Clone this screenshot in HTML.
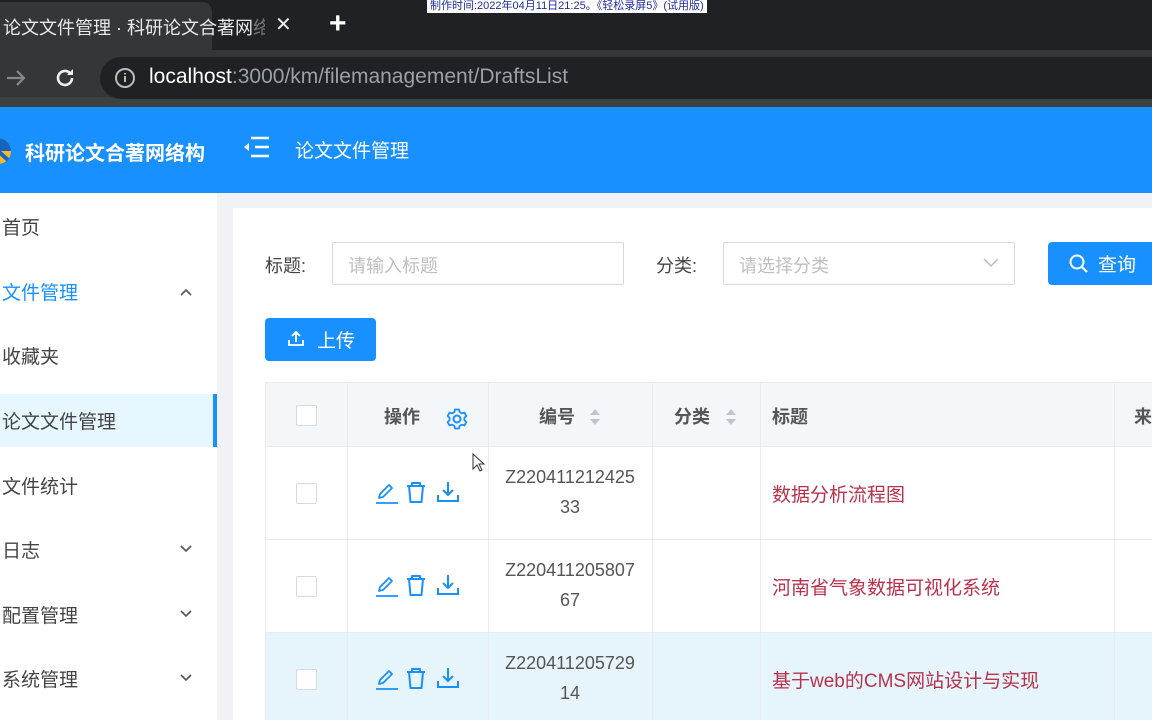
<!DOCTYPE html>
<html><head><meta charset="utf-8"><style>
*{margin:0;padding:0;box-sizing:border-box}
body{width:1152px;height:720px;overflow:hidden;position:relative;font-family:"Liberation Sans","Noto Sans CJK SC",sans-serif;background:#f0f2f5}
.a{position:absolute}
.tabbar{left:0;top:0;width:1152px;height:50px;background:#202124}
.tab{left:0;top:2px;width:212px;height:48px;background:#35363a;border-radius:0 10px 0 0}
.toolbar{left:0;top:50px;width:1152px;height:57px;background:#35363a}
.omni{left:100px;top:57px;width:1080px;height:42px;background:#202124;border-radius:21px}
.hdr{left:0;top:107px;width:1152px;height:86px;background:#1890ff}
.side{left:0;top:193px;width:217px;height:527px;background:#fff}
.mi{position:absolute;left:2px;font-size:19px;color:#444}
.card{left:233px;top:208px;width:919px;height:512px;background:#fff}
.inp{border:1px solid #d9d9d9;border-radius:2px;height:43px;top:242px;font-size:18px;color:#bfbfbf;padding:9px 15px}
.btn{background:#1890ff;color:#fff;border-radius:4px;font-size:19px}
.th{background:#f3f7f9}
.cb{width:21px;height:21px;border:1px solid #d9d9d9;border-radius:2px;background:#fff}
.vl{width:1px;background:#e8ecef}
.hl{height:1px;background:#e8ecef}
.t{font-size:19px;color:#b8324c}
.num{font-size:18px;color:#555;text-align:center;width:164px;line-height:30px}
</style></head><body>
<div class="a tabbar"></div>
<div class="a tab"></div>
<div class="a" style="left:3px;top:14px;font-size:18px;color:#e8eaed;white-space:nowrap;width:262px;overflow:hidden">论文文件管理 · 科研论文合著网<span style="color:#777">络</span></div>
<div class="a" style="left:275px;top:12px;font-size:20px;color:#e8eaed">✕</div>
<div class="a" style="left:329px;top:7px;font-size:30px;color:#fff;font-weight:bold">+</div>
<div class="a" style="left:427px;top:0;height:13px;background:#fff;color:#1f2d9c;font-size:11px;line-height:13px;padding:0 3px;white-space:nowrap">制作时间:2022年04月11日21:25。《轻松录屏5》(试用版)</div>
<div class="a toolbar"></div>
<div class="a" style="left:0;top:97px;width:1152px;height:10px;background:#3c4043"></div>
<div class="a omni"></div>
<svg class="a" style="left:4px;top:66px" width="24" height="24" viewBox="0 0 24 24"><path d="M3 12h17M13 5l7 7-7 7" stroke="#888" stroke-width="2.2" fill="none"/></svg>
<svg class="a" style="left:53px;top:66px" width="24" height="24" viewBox="0 0 24 24"><path d="M19 12a7 7 0 1 1-2.2-5.1" stroke="#eee" stroke-width="2.6" fill="none"/><path d="M20 3v6h-6z" fill="#eee"/></svg>
<svg class="a" style="left:114px;top:67px" width="22" height="22" viewBox="0 0 22 22"><circle cx="11" cy="11" r="9" stroke="#bbb" stroke-width="2" fill="none"/><path d="M11 9v6M11 6v1.5" stroke="#bbb" stroke-width="2"/></svg>
<div class="a" style="left:149px;top:65px;font-size:21px;color:#fff;white-space:nowrap">localhost<span style="color:#9aa0a6">:3000/km/filemanagement/DraftsList</span></div>
<div class="a hdr"></div>
<svg class="a" style="left:-10px;top:135px" width="22" height="32" viewBox="0 0 22 32"><circle cx="8" cy="16" r="13" fill="#f6b826"/><path d="M8 3a13 13 0 0 1 13 13H8z" fill="#1565c0"/><path d="M8 16l10 9" stroke="#1565c0" stroke-width="4"/></svg>
<div class="a" style="left:25px;top:137px;font-size:20px;font-weight:bold;color:#fff">科研论文合著网络构</div>
<svg class="a" style="left:242px;top:135px" width="28" height="24" viewBox="0 0 28 24"><path d="M9 3h18M13 12h14M9 21h18" stroke="#fff" stroke-width="2.6"/><path d="M2 12l5-4v8z" fill="#fff"/></svg>
<div class="a" style="left:295px;top:136px;font-size:19px;color:#fff">论文文件管理</div>
<div class="a side">
<div class="mi" style="top:20px">首页</div>
<div class="mi" style="top:85px;color:#1890ff">文件管理</div>
<svg class="a" style="left:180px;top:95px" width="12" height="8"><path d="M1 7l5-5 5 5" stroke="#555" stroke-width="1.6" fill="none"/></svg>
<div class="mi" style="top:149px">收藏夹</div>
<div class="a" style="left:0;top:201px;width:217px;height:53px;background:#e6f7ff;border-right:4px solid #1890ff"></div>
<div class="mi" style="top:214px">论文文件管理</div>
<div class="mi" style="top:279px">文件统计</div>
<div class="mi" style="top:343px">日志</div>
<div class="mi" style="top:408px">配置管理</div>
<div class="mi" style="top:472px">系统管理</div>
<svg class="a" style="left:180px;top:352px" width="12" height="8"><path d="M1 1l5 5 5-5" stroke="#555" stroke-width="1.6" fill="none"/></svg>
<svg class="a" style="left:180px;top:417px" width="12" height="8"><path d="M1 1l5 5 5-5" stroke="#555" stroke-width="1.6" fill="none"/></svg>
<svg class="a" style="left:180px;top:481px" width="12" height="8"><path d="M1 1l5 5 5-5" stroke="#555" stroke-width="1.6" fill="none"/></svg>
</div>
<div class="a card"></div>
<div class="a" style="left:265px;top:252px;font-size:18px;color:#444">标题:</div>
<div class="a inp" style="left:332px;width:292px">请输入标题</div>
<div class="a" style="left:656px;top:252px;font-size:18px;color:#444">分类:</div>
<div class="a inp" style="left:723px;width:292px">请选择分类</div>
<svg class="a" style="left:983px;top:258px" width="16" height="10"><path d="M1 1l7 7 7-7" stroke="#bbb" stroke-width="1.5" fill="none"/></svg>
<div class="a btn" style="left:1048px;top:242px;width:120px;height:43px"></div>
<svg class="a" style="left:1068px;top:253px" width="22" height="22" viewBox="0 0 22 22"><circle cx="9" cy="9" r="6.5" stroke="#fff" stroke-width="2" fill="none"/><path d="M14 14l5 5" stroke="#fff" stroke-width="2.2"/></svg>
<div class="a" style="left:1098px;top:250px;font-size:19px;color:#fff">查询</div>
<div class="a btn" style="left:265px;top:318px;width:111px;height:43px"></div>
<svg class="a" style="left:287px;top:329px" width="18" height="18" viewBox="0 0 18 18"><path d="M9 13V3M5 7l4-4 4 4M2 11v5h14v-5" stroke="#fff" stroke-width="1.8" fill="none"/></svg>
<div class="a" style="left:317px;top:326px;font-size:19px;color:#fff">上传</div>
<div class="a th" style="left:265px;top:382px;width:887px;height:64px;border-top:1px solid #e8ecef"></div>
<div class="a" style="left:265px;top:632px;width:887px;height:88px;background:#e6f4fb"></div>
<div class="a vl" style="left:265px;top:382px;height:338px"></div>
<div class="a vl" style="left:347px;top:382px;height:338px"></div>
<div class="a vl" style="left:488px;top:382px;height:338px"></div>
<div class="a vl" style="left:652px;top:382px;height:338px"></div>
<div class="a vl" style="left:760px;top:382px;height:338px"></div>
<div class="a vl" style="left:1114px;top:382px;height:338px"></div>
<div class="a hl" style="left:265px;top:446px;width:887px"></div>
<div class="a hl" style="left:265px;top:539px;width:887px"></div>
<div class="a hl" style="left:265px;top:632px;width:887px"></div>
<div class="a cb" style="left:296px;top:405px"></div>
<div class="a cb" style="left:296px;top:483px"></div>
<div class="a cb" style="left:296px;top:576px"></div>
<div class="a cb" style="left:296px;top:669px"></div>
<div class="a" style="left:384px;top:403px;font-size:18px;font-weight:bold;color:#555">操作</div>
<svg class="a" style="left:445px;top:407px" width="24" height="24" viewBox="0 0 24 24"><circle cx="12" cy="12" r="3.5" stroke="#1890ff" stroke-width="2" fill="none"/><path d="M10 2.5h4l.6 2.6 2.3 1.3 2.5-.8 2 3.4-2 1.8v2.4l2 1.8-2 3.4-2.5-.8-2.3 1.3-.6 2.6h-4l-.6-2.6-2.3-1.3-2.5.8-2-3.4 2-1.8v-2.4l-2-1.8 2-3.4 2.5.8 2.3-1.3z" stroke="#1890ff" stroke-width="1.8" fill="none" stroke-linejoin="round"/></svg>
<div class="a" style="left:539px;top:403px;font-size:18px;font-weight:bold;color:#555">编号</div>
<div class="a" style="left:674px;top:403px;font-size:18px;font-weight:bold;color:#555">分类</div>
<div class="a" style="left:772px;top:403px;font-size:18px;font-weight:bold;color:#555">标题</div>
<div class="a" style="left:1134px;top:403px;font-size:18px;font-weight:bold;color:#555">来</div>
<svg class="a" style="left:589px;top:408px" width="12" height="18"><path d="M1 7l5-6 5 6zM1 11l5 6 5-6z" fill="#c0c4cc"/></svg>
<svg class="a" style="left:725px;top:408px" width="12" height="18"><path d="M1 7l5-6 5 6zM1 11l5 6 5-6z" fill="#c0c4cc"/></svg>
<svg class="a" style="left:472px;top:453px" width="14" height="20" viewBox="0 0 14 20"><path d="M1 1v15l4-4 3 6 2-1-3-6h5z" fill="#fff" stroke="#333" stroke-width="1"/></svg>
<div class="a num" style="left:488px;top:462px">Z220411212425<br>33</div>
<div class="a num" style="left:488px;top:555px">Z220411205807<br>67</div>
<div class="a num" style="left:488px;top:648px">Z220411205729<br>14</div>
<div class="a t" style="left:772px;top:480px">数据分析流程图</div>
<div class="a t" style="left:772px;top:573px">河南省气象数据可视化系统</div>
<div class="a t" style="left:772px;top:666px">基于web的CMS网站设计与实现</div>
<svg width="0" height="0" style="position:absolute"><defs>
<g id="ic"><path d="M4 18l1-4L14 5l3 3-9 9z" stroke="#1890ff" stroke-width="1.8" fill="none" stroke-linejoin="round"/><path d="M1 23h22" stroke="#1890ff" stroke-width="1.8"/>
<path d="M32 6h18M37 6V3h8v3M34 6l1.5 16h11L48 6" stroke="#1890ff" stroke-width="2" fill="none" stroke-linejoin="round"/>
<path d="M73 2v13M68 10l5 5 5-5M63 15v6h20v-6" stroke="#1890ff" stroke-width="2" fill="none"/></g></defs></svg>
<svg class="a" style="left:375px;top:480px" width="90" height="26"><use href="#ic"/></svg>
<svg class="a" style="left:375px;top:573px" width="90" height="26"><use href="#ic"/></svg>
<svg class="a" style="left:375px;top:666px" width="90" height="26"><use href="#ic"/></svg>
</body></html>
